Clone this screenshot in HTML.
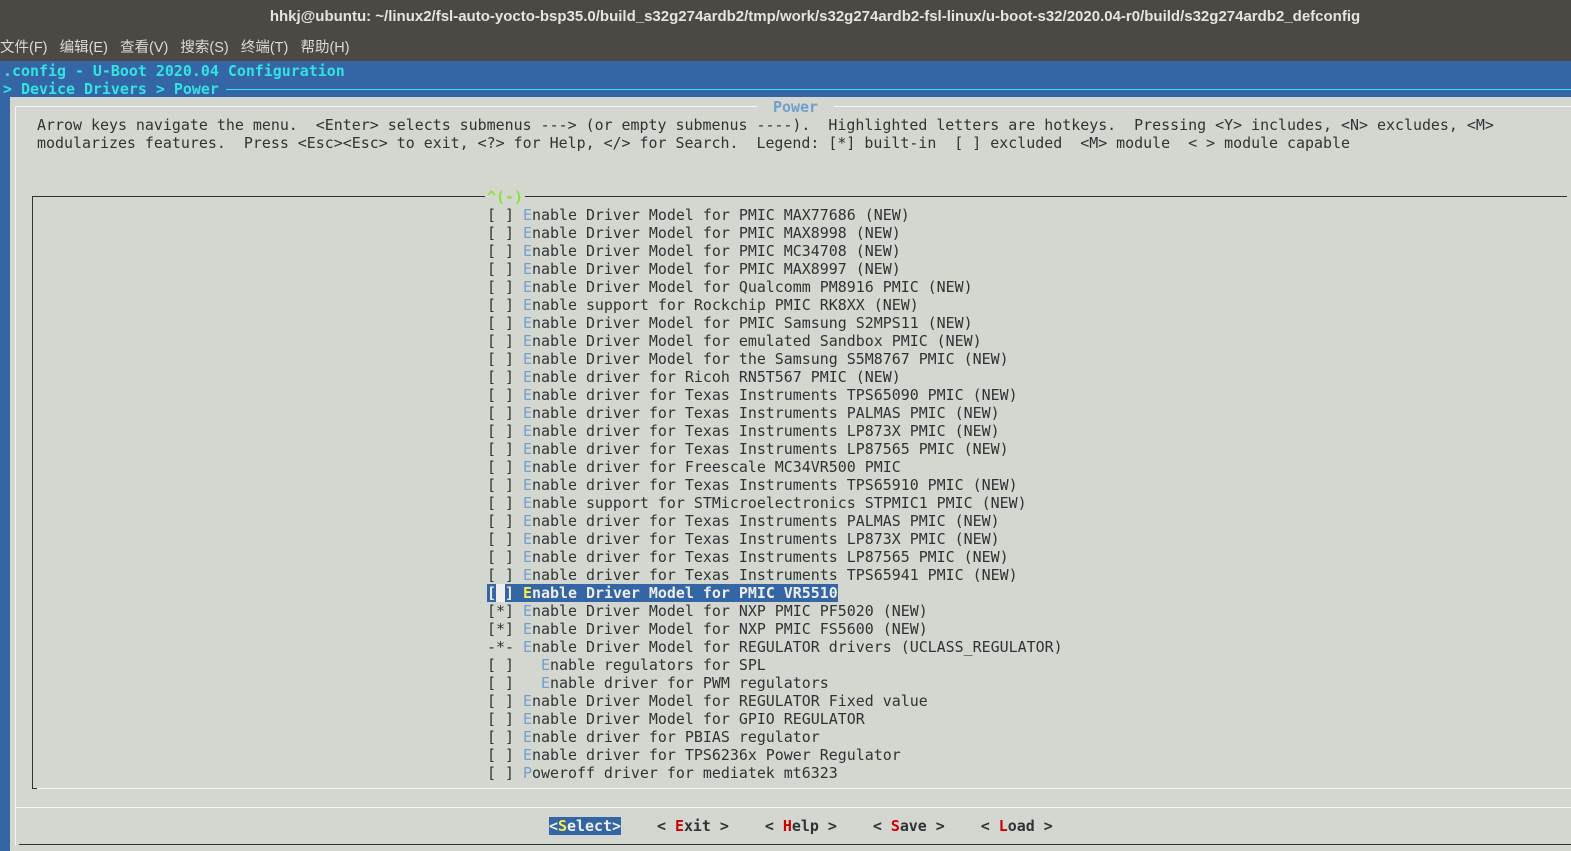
<!DOCTYPE html>
<html><head><meta charset="utf-8"><style>
*{margin:0;padding:0}
body{width:1571px;height:851px;overflow:hidden;background:#d3d7cf;position:relative;font-family:"DejaVu Sans Mono","Liberation Mono",monospace;font-size:14.95px;color:#2e3436}
.a{position:absolute;white-space:pre;line-height:18px}
.h{color:#729fcf}
.r{color:#cc0000}
.y{color:#fce94f}
</style></head><body>
<div style="position:absolute;left:0;top:0;width:1571px;height:61px;background:#4c4944"></div>
<div class="a" style="left:0;top:8px;width:1630px;text-align:center;font-family:'Liberation Sans',sans-serif;font-weight:bold;font-size:15px;color:#e6e4e0">hhkj@ubuntu: ~/linux2/fsl-auto-yocto-bsp35.0/build_s32g274ardb2/tmp/work/s32g274ardb2-fsl-linux/u-boot-s32/2020.04-r0/build/s32g274ardb2_defconfig</div>
<div class="a" style="left:0;top:39px;font-family:'Liberation Sans','Noto Sans CJK SC',sans-serif;font-size:14.5px;color:#dcdad5">文件(F)   编辑(E)   查看(V)   搜索(S)   终端(T)   帮助(H)</div>
<div style="position:absolute;left:0;top:61px;width:1571px;height:790px;background:#3465a4"></div>
<div class="a" style="left:3px;top:62px;color:#34e2e2;font-weight:bold">.config - U-Boot 2020.04 Configuration</div>
<div class="a" style="left:3px;top:80px;color:#34e2e2;font-weight:bold">&gt; Device Drivers &gt; Power</div>
<div style="position:absolute;left:226px;top:89px;width:1345px;height:1px;background:#34e2e2"></div>
<div style="position:absolute;left:10px;top:97px;width:1561px;height:754px;background:#d3d7cf"></div>
<div style="position:absolute;left:15px;top:106px;width:1556px;height:1px;background:#f4f4f0"></div>
<div style="position:absolute;left:15px;top:106px;width:1px;height:740px;background:#f4f4f0"></div>
<div style="position:absolute;left:19px;top:844px;width:1552px;height:1px;background:#2e3436"></div>
<div class="a" style="left:757px;top:98px;background:#d3d7cf;color:#729fcf;font-weight:bold;padding:0 7px"> Power </div>
<div class="a" style="left:37px;top:116px">Arrow keys navigate the menu.  &lt;Enter&gt; selects submenus ---&gt; (or empty submenus ----).  Highlighted letters are hotkeys.  Pressing &lt;Y&gt; includes, &lt;N&gt; excludes, &lt;M&gt;
modularizes features.  Press &lt;Esc&gt;&lt;Esc&gt; to exit, &lt;?&gt; for Help, &lt;/&gt; for Search.  Legend: [*] built-in  [ ] excluded  &lt;M&gt; module  &lt; &gt; module capable</div>
<div style="position:absolute;left:32px;top:196px;width:1px;height:593px;background:#2e3436"></div>
<div style="position:absolute;left:32px;top:196px;width:1535px;height:1px;background:#2e3436"></div>
<div style="position:absolute;left:36px;top:788px;width:1535px;height:1px;background:#f4f4f0"></div>
<div style="position:absolute;left:32px;top:788px;width:5px;height:1px;background:#2e3436"></div>
<div style="position:absolute;left:15px;top:807px;width:1556px;height:1px;background:#f4f4f0"></div>
<div class="a" style="left:485px;top:188px;background:#d3d7cf;color:#8ae234;font-weight:bold;padding:0 2px">^(-)</div>
<div class="a" style="left:487px;top:206px">[ ] <span class="h">E</span>nable Driver Model for PMIC MAX77686 (NEW)
[ ] <span class="h">E</span>nable Driver Model for PMIC MAX8998 (NEW)
[ ] <span class="h">E</span>nable Driver Model for PMIC MC34708 (NEW)
[ ] <span class="h">E</span>nable Driver Model for PMIC MAX8997 (NEW)
[ ] <span class="h">E</span>nable Driver Model for Qualcomm PM8916 PMIC (NEW)
[ ] <span class="h">E</span>nable support for Rockchip PMIC RK8XX (NEW)
[ ] <span class="h">E</span>nable Driver Model for PMIC Samsung S2MPS11 (NEW)
[ ] <span class="h">E</span>nable Driver Model for emulated Sandbox PMIC (NEW)
[ ] <span class="h">E</span>nable Driver Model for the Samsung S5M8767 PMIC (NEW)
[ ] <span class="h">E</span>nable driver for Ricoh RN5T567 PMIC (NEW)
[ ] <span class="h">E</span>nable driver for Texas Instruments TPS65090 PMIC (NEW)
[ ] <span class="h">E</span>nable driver for Texas Instruments PALMAS PMIC (NEW)
[ ] <span class="h">E</span>nable driver for Texas Instruments LP873X PMIC (NEW)
[ ] <span class="h">E</span>nable driver for Texas Instruments LP87565 PMIC (NEW)
[ ] <span class="h">E</span>nable driver for Freescale MC34VR500 PMIC
[ ] <span class="h">E</span>nable driver for Texas Instruments TPS65910 PMIC (NEW)
[ ] <span class="h">E</span>nable support for STMicroelectronics STPMIC1 PMIC (NEW)
[ ] <span class="h">E</span>nable driver for Texas Instruments PALMAS PMIC (NEW)
[ ] <span class="h">E</span>nable driver for Texas Instruments LP873X PMIC (NEW)
[ ] <span class="h">E</span>nable driver for Texas Instruments LP87565 PMIC (NEW)
[ ] <span class="h">E</span>nable driver for Texas Instruments TPS65941 PMIC (NEW)
<span style="background:#3465a4;color:#eeeeec;font-weight:bold">[<span style="background:#eeeeec;color:#3465a4"> </span>] <span class="y">E</span>nable Driver Model for PMIC VR5510</span>
[*] <span class="h">E</span>nable Driver Model for NXP PMIC PF5020 (NEW)
[*] <span class="h">E</span>nable Driver Model for NXP PMIC FS5600 (NEW)
-*- <span class="h">E</span>nable Driver Model for REGULATOR drivers (UCLASS_REGULATOR)
[ ]   <span class="h">E</span>nable regulators for SPL
[ ]   <span class="h">E</span>nable driver for PWM regulators
[ ] <span class="h">E</span>nable Driver Model for REGULATOR Fixed value
[ ] <span class="h">E</span>nable Driver Model for GPIO REGULATOR
[ ] <span class="h">E</span>nable driver for PBIAS regulator
[ ] <span class="h">E</span>nable driver for TPS6236x Power Regulator
[ ] <span class="h">P</span>oweroff driver for mediatek mt6323</div>
<div class="a" style="left:549px;top:817px;font-weight:bold"><span style="background:#3465a4;color:#eeeeec">&lt;<span class="y">S</span>elect&gt;</span>    &lt; <span class="r">E</span>xit &gt;    &lt; <span class="r">H</span>elp &gt;    &lt; <span class="r">S</span>ave &gt;    &lt; <span class="r">L</span>oad &gt;</div>
</body></html>
